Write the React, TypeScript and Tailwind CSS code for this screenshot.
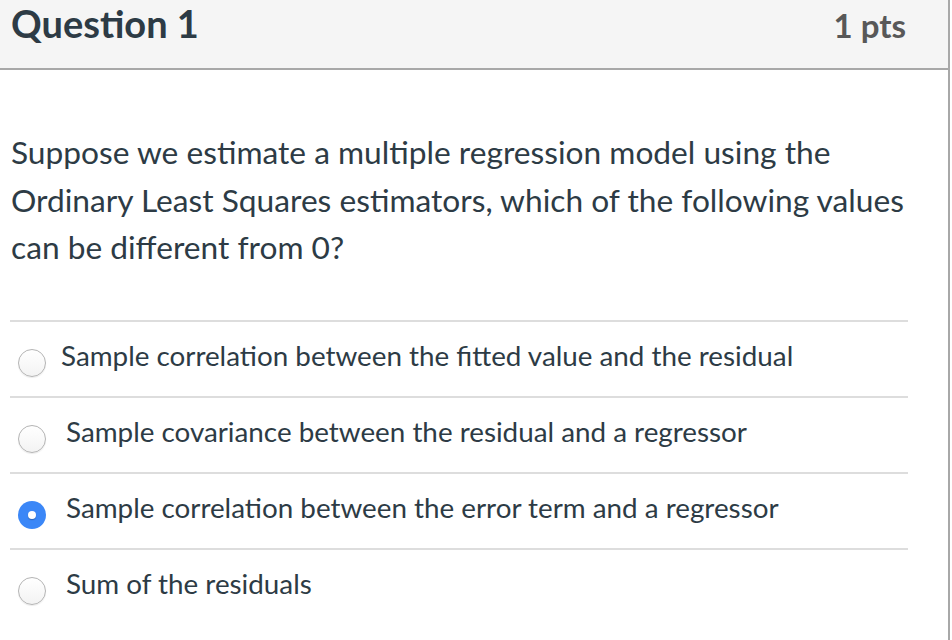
import React from 'react';

const options = [
    { text: 'Sample correlation between the fitted value and the residual', selected: false, gap: 'ml-[15px]' },
    { text: 'Sample covariance between the residual and a regressor', selected: false, gap: 'ml-[20px]' },
    { text: 'Sample correlation between the error term and a regressor', selected: true, gap: 'ml-[20px]' },
    { text: 'Sum of the residuals', selected: false, gap: 'ml-[20px]' },
];

const Radio: React.FC<{ checked: boolean }> = ({ checked }) => {
    if (checked) {
        return (
            <span className="mt-[9px] flex h-[28px] w-[28px] shrink-0 items-center justify-center rounded-full bg-[#3b87f7]">
                <span className="h-[8px] w-[8px] rounded-full bg-white shadow-[0_1px_1px_rgba(0,0,0,0.25)]" />
            </span>
        );
    }
    return (
        <span className="mt-[9px] block h-[28px] w-[28px] shrink-0 rounded-full border border-[#b4b4b4] bg-gradient-to-b from-white to-[#f3f3f3] shadow-[0_1px_1px_rgba(0,0,0,0.08)]" />
    );
};

export default function App() {
    return (
        <div className="min-h-[640px] w-[950px] border-r-2 border-[#a8a8a8] bg-white font-['Lato','Liberation_Sans',sans-serif] text-[#2d3b45]">
            <div className="flex h-[70px] items-baseline justify-between border-b-2 border-[#a8a8a8] bg-[#f5f5f5] pl-[11px] pr-[42px] pt-[2px]">
                <h2 className="text-[38px] font-bold leading-[43px]">Question 1</h2>
                <span className="text-[33px] font-bold leading-[43px] text-[#585858]">1 pts</span>
            </div>

            <div className="pl-[10px] pr-[40px]">
                <p className="pl-[1px] pt-[59px] text-[31.7px] leading-[47.5px]">
                    Suppose we estimate a multiple regression model using the
                    <br />
                    Ordinary Least Squares estimators, which of the following values
                    <br />
                    can be different from 0?
                </p>

                <div className="mt-[48px]">
                    {options.map((opt) => (
                        <div key={opt.text} className="flex h-[76px] items-start border-t-2 border-[#dddddd] pl-[8px] pt-[18px]">
                            <Radio checked={opt.selected} />
                            <span className={`${opt.gap} whitespace-nowrap text-[27.8px] leading-[31px]`}>{opt.text}</span>
                        </div>
                    ))}
                </div>
            </div>
        </div>
    );
}
